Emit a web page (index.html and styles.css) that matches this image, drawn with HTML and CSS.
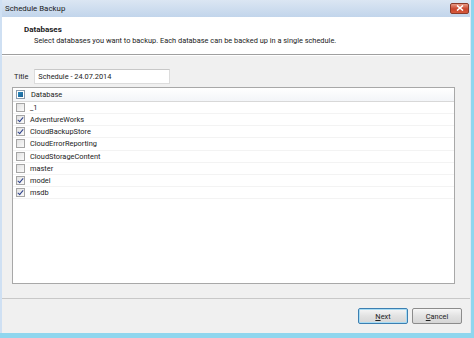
FILE: index.html
```html
<!DOCTYPE html>
<html lang="en">
<head>
  <meta charset="UTF-8">
  <title>Schedule Backup</title>
  <link rel="stylesheet" href="styles.css">
</head>
<body>
  <div class="window">
    <div class="titlebar">
      <span class="title">Schedule Backup</span>
      <span class="close">
        <svg width="8" height="6" viewBox="0 0 8 6"><path d="M1 0.5 L7 5.5 M7 0.5 L1 5.5" stroke="#fff" stroke-width="1.6"/></svg>
      </span>
    </div>

    <div class="banner">
      <div class="banner-title">Databases</div>
      <div class="banner-text">Select databases you want to backup. Each database can be backed up in a single schedule.</div>
    </div>

    <div class="content">
      <div class="title-row">
        <label for="titleInput">Title</label>
        <input type="text" id="titleInput" value="Schedule - 24.07.2014">
      </div>

      <div class="listview">
        <div class="lv-header">
          <span class="check partial"></span>
          <span>Database</span>
        </div>
        <div class="lv-row"><span class="check"></span><span>_1</span></div>
        <div class="lv-row"><span class="check on"></span><span>AdventureWorks</span></div>
        <div class="lv-row"><span class="check on"></span><span>CloudBackupStore</span></div>
        <div class="lv-row"><span class="check"></span><span>CloudErrorReporting</span></div>
        <div class="lv-row"><span class="check"></span><span>CloudStorageContent</span></div>
        <div class="lv-row"><span class="check"></span><span>master</span></div>
        <div class="lv-row"><span class="check on"></span><span>model</span></div>
        <div class="lv-row"><span class="check on"></span><span>msdb</span></div>
      </div>
    </div>

    <div class="footer">
      <button class="btn default"><u>N</u>ext</button>
      <button class="btn"><u>C</u>ancel</button>
    </div>
  </div>
</body>
</html>
```

FILE: styles.css
```css
body {
  margin: 0;
  width: 474px;
  height: 338px;
  background: #8fd6ee;
  font-family: Roboto, "Liberation Sans", sans-serif;
  font-size: 7.4px;
  color: #222;
  overflow: hidden;
}

.window {
  width: 468px;
  height: 333px;
  border-left: 2px solid #cfe0f3;
  border-right: 1px solid #dfe9f5;
  background: #f0f0f0;
  display: flex;
  flex-direction: column;
}

.titlebar {
  height: 17px;
  flex: none;
  display: flex;
  align-items: center;
  justify-content: space-between;
  padding: 0 1px 0 3px;
  background: linear-gradient(#dbe6f3, #c2d5eb);
  font-size: 7.9px;
  color: #1a1a1a;
}

.close {
  width: 19px;
  height: 11px;
  margin-top: -1px;
  border-radius: 2px;
  border: 1px solid #8a3a2a;
  background: linear-gradient(#e99a86, #c8442c 55%, #d65a3d);
  display: flex;
  align-items: center;
  justify-content: center;
  box-sizing: border-box;
}

.banner {
  height: 38px;
  flex: none;
  background: #fff;
  border-bottom: 1px solid #a0a0a0;
  padding: 7px 0 0 22px;
  box-sizing: border-box;
}

.banner-title {
  font-weight: bold;
  font-size: 8px;
  line-height: 11px;
}

.banner-text {
  padding-left: 10px;
  line-height: 12px;
}

.content {
  flex: 1;
  padding: 13px 12px 0 10px;
  border-top: 1px solid #fff;
}

.title-row {
  display: flex;
  align-items: center;
  gap: 6px;
  padding-left: 2px;
  margin-bottom: 3px;
}

.title-row input {
  width: 136px;
  height: 15px;
  box-sizing: border-box;
  border: 1px solid #dcdcdc;
  border-top-color: #c8c8c8;
  padding: 0 3px;
  font-family: inherit;
  font-size: 7.4px;
  color: #222;
  outline: none;
}

.listview {
  width: 443px;
  height: 197px;
  box-sizing: border-box;
  border: 1px solid #a8a8a8;
  background: #fff;
}

.lv-header {
  height: 14px;
  display: flex;
  align-items: center;
  gap: 6px;
  padding-left: 3px;
  border-bottom: 1px solid #d8d8d8;
  box-sizing: border-box;
  background: linear-gradient(#fff, #f3f5f8);
}

.lv-row {
  height: 12.15px;
  display: flex;
  align-items: center;
  gap: 5px;
  padding-left: 3px;
  border-bottom: 1px solid #f3f3f3;
  box-sizing: border-box;
}

.check {
  width: 9px;
  height: 9px;
  box-sizing: border-box;
  border: 1px solid #a5a5a5;
  background: linear-gradient(135deg, #e2e2e2, #fafafa);
  position: relative;
}

.check.partial {
  border-color: #8a9aaa;
  background: #fff;
}

.check.partial::after {
  content: "";
  position: absolute;
  left: 1px;
  top: 1px;
  width: 5px;
  height: 5px;
  background: linear-gradient(135deg, #2a8cc0, #1a5f93);
}

.check.on::after {
  content: "";
  position: absolute;
  left: 2px;
  top: 0px;
  width: 2px;
  height: 5px;
  border: solid #2b3f8a;
  border-width: 0 1.5px 1.5px 0;
  transform: rotate(40deg);
}

.footer {
  height: 34px;
  flex: none;
  border-top: 1px solid #c8c8c8;
  display: flex;
  justify-content: flex-end;
  align-items: center;
  gap: 4px;
  padding-right: 8px;
}

.btn {
  width: 50px;
  height: 16px;
  box-sizing: border-box;
  border: 1px solid #8c8c8c;
  border-radius: 2px;
  background: linear-gradient(#f6f6f6, #e2e2e2 50%, #d6d6d6);
  font-family: inherit;
  font-size: 7.4px;
  color: #222;
  padding: 0;
}

.btn.default {
  border-color: #3c7fb1;
  box-shadow: inset 0 0 0 1px #a8dcf4;
}
```
